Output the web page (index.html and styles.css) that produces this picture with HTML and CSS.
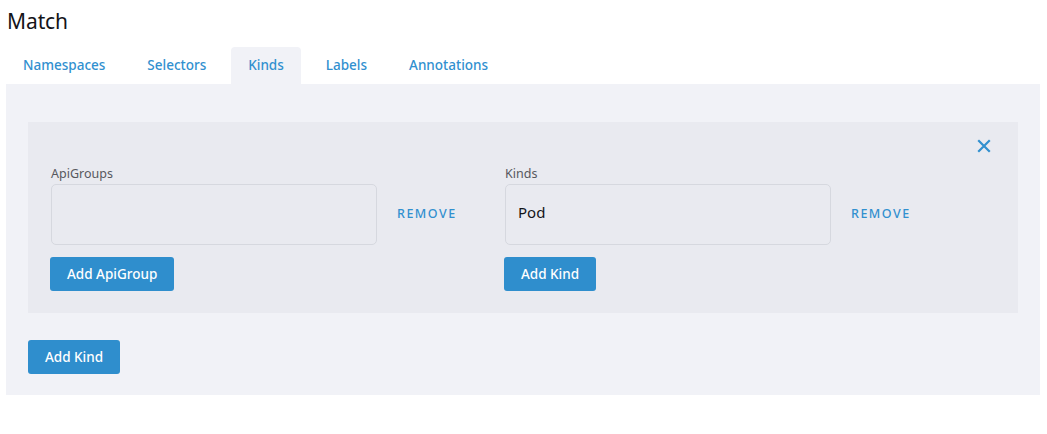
FILE: index.html
```html
<!DOCTYPE html>
<html>
<head>
<meta charset="utf-8">
<link rel="stylesheet" href="styles.css">
</head>
<body>
<div class="page">
  <h2 class="title">Match</h2>
  <ul class="tabs">
    <li class="tab">Namespaces</li>
    <li class="tab">Selectors</li>
    <li class="tab active">Kinds</li>
    <li class="tab">Labels</li>
    <li class="tab">Annotations</li>
  </ul>
  <div class="panel">
    <div class="card">
      <button class="close" aria-label="Remove">
        <svg width="14" height="14" viewBox="0 0 14 14"><path d="M2 2 L12 12 M12 2 L2 12" stroke="#3190cf" stroke-width="2.2" stroke-linecap="square" fill="none"/></svg>
      </button>
      <div class="cols">
        <div class="col">
          <label class="label">ApiGroups</label>
          <div class="row">
            <div class="input"></div>
            <button class="remove">REMOVE</button>
          </div>
          <button class="btn">Add ApiGroup</button>
        </div>
        <div class="col">
          <label class="label">Kinds</label>
          <div class="row">
            <div class="input">Pod</div>
            <button class="remove">REMOVE</button>
          </div>
          <button class="btn">Add Kind</button>
        </div>
      </div>
    </div>
    <button class="btn outer">Add Kind</button>
  </div>
</div>
</body>
</html>
```

FILE: styles.css
```css
* { box-sizing: border-box; }
body {
  margin: 0;
  background: #ffffff;
  font-family: "Noto Sans", "Open Sans", sans-serif;
  color: #141419;
}
.page {
  padding: 0 7px 0 6px;
}
.title {
  margin: 0;
  padding: 8px 0 0 1px;
  height: 47px;
  font-size: 21px;
  font-weight: 400;
  line-height: 26px;
  letter-spacing: -0.1px;
}
.tabs {
  list-style: none;
  margin: 0;
  padding: 0;
  display: flex;
  gap: 8px;
  height: 37px;
}
.tab {
  padding: 0 17px;
  line-height: 37px;
  font-size: 13.5px;
  font-weight: 500;
  color: #3190cf;
  border-radius: 4px 4px 0 0;
  letter-spacing: 0;
}
.tab.active {
  background: #f1f2f7;
}
.panel {
  background: #f1f2f7;
  padding: 38px 22px 21px 22px;
}
.card {
  position: relative;
  background: #e9eaf0;
  height: 191px;
  padding: 44px 23px 0 23px;
}
.close {
  position: absolute;
  top: 17px;
  right: 27px;
  background: none;
  border: 0;
  padding: 0;
  width: 14px;
  height: 14px;
  cursor: pointer;
}
.close svg { display: block; }
.cols {
  display: grid;
  grid-template-columns: 454px 454px;
}
.col {
  display: flex;
  flex-direction: column;
  align-items: flex-start;
}
.label {
  font-size: 12.5px;
  color: #57585e;
  line-height: 16px;
  height: 18px;
}
.row {
  display: flex;
  align-items: center;
  gap: 20px;
}
.input {
  width: 326px;
  height: 61px;
  border: 1px solid #d6d8df;
  border-radius: 5px;
  background: #e9eaf0;
  padding: 0 12px;
  font-size: 15px;
  line-height: 55px;
  color: #141419;
}
.remove {
  background: none;
  border: 0;
  padding: 0;
  margin-top: -3px;
  font-family: inherit;
  font-size: 12.5px;
  font-weight: 500;
  letter-spacing: 1.5px;
  color: #3190cf;
}
.btn {
  margin-top: 12px;
  margin-left: -1px;
  height: 34px;
  padding: 0 17px;
  background: #2f8ecd;
  color: #ffffff;
  border: 0;
  border-radius: 3px;
  font-family: inherit;
  font-size: 13.5px;
  font-weight: 500;
}
.btn.outer {
  margin-top: 27px;
  margin-left: 0;
}
```
